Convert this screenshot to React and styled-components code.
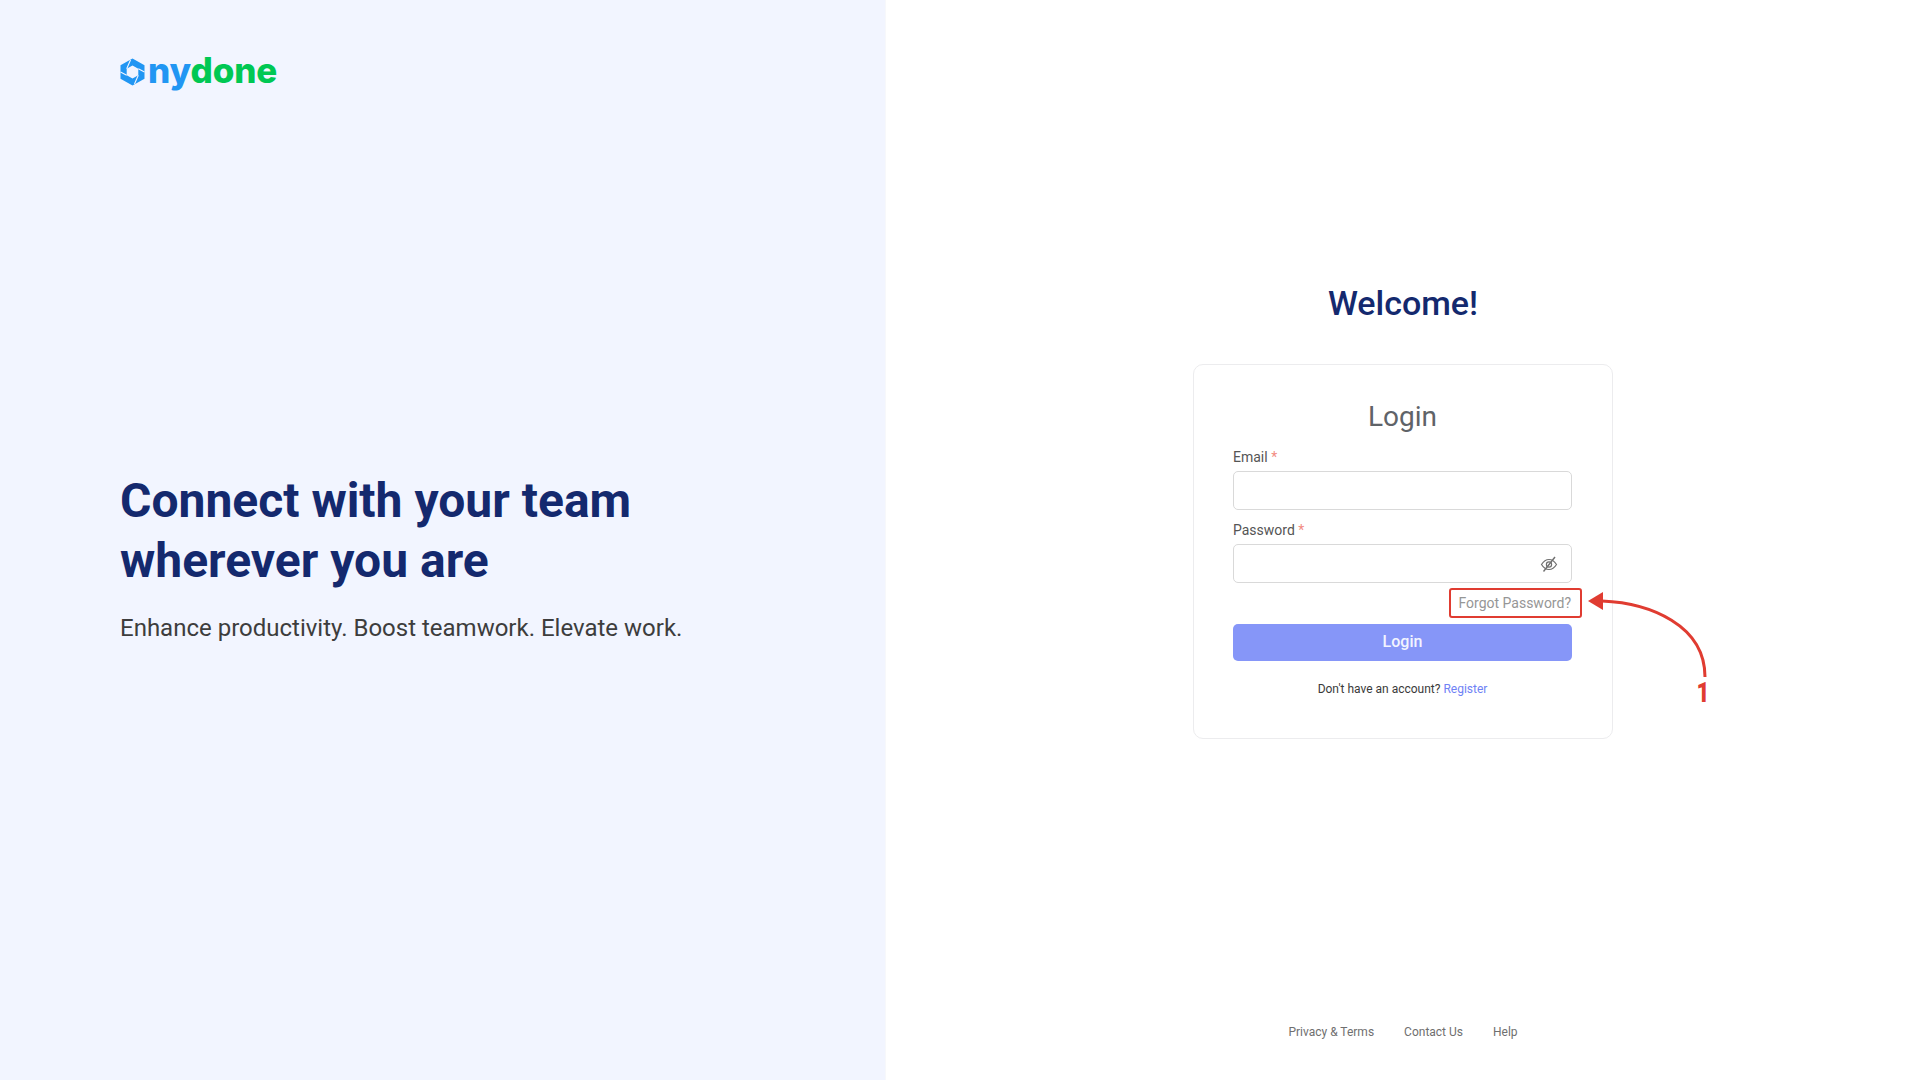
import React from 'react'
import styled, { createGlobalStyle } from 'styled-components'

const GlobalStyle = createGlobalStyle`
  html, body {
    margin: 0;
    padding: 0;
    background: #fff;
  }
  * {
    box-sizing: border-box;
  }
  body {
    font-family: Roboto, "Liberation Sans", sans-serif;
  }
`

const LogoMark = () => (
  <LogoSvg width="25" height="28" viewBox="0 0 25 28">
    <path
      fill="#2196f3"
      fillRule="evenodd"
      d="M12.5 0.5 L24.5 7.2 L24.5 20.8 L12.5 27.5 L0.5 20.8 L0.5 7.2 Z M12.5 7.5 L6.7 10.7 L6.7 17.3 L12.5 20.5 L18.3 17.3 L18.3 10.7 Z"
    />
    <path
      stroke="#f2f5ff"
      strokeWidth="1.1"
      fill="none"
      d="M6.7 10.7 L10.5 2 M18.3 10.7 L24.5 14 M18.3 17.3 L14.5 26 M6.7 17.3 L0.5 14"
    />
  </LogoSvg>
)

const EyeSlash = () => (
  <svg width="18" height="18" viewBox="0 0 18 18" fill="none" stroke="#707070" strokeWidth="1.2">
    <path d="M1.5 9.5 C4 5.5 6.5 4.5 9 4.5 C11.5 4.5 14 5.5 16.5 9.5 C14 13.5 11.5 14.5 9 14.5 C6.5 14.5 4 13.5 1.5 9.5 Z" />
    <circle cx="9" cy="9.5" r="2.6" />
    <path d="M3.5 16.5 L15 2" strokeWidth="1.4" />
  </svg>
)

const Arrow = () => (
  <svg width="122" height="112" viewBox="0 0 122 112" fill="none">
    <path d="M14 12 C62 14 117 36 117 88" stroke="#e03c31" strokeWidth="3" />
    <path d="M0 12 L15 3 L15 21 Z" fill="#e03c31" />
  </svg>
)

export default function App() {
  return (
    <Page>
      <GlobalStyle />
      <LeftPanel>
        <Logo>
          <LogoMark />
          <LogoText>
            <LogoBlue>ny</LogoBlue>
            <LogoGreen>done</LogoGreen>
          </LogoText>
        </Logo>
        <Hero>
          <Headline>
            Connect with your team
            <br />
            wherever you are
          </Headline>
          <Tagline>Enhance productivity. Boost teamwork. Elevate work.</Tagline>
        </Hero>
      </LeftPanel>
      <RightPanel>
        <Welcome>Welcome!</Welcome>
        <Card>
          <CardTitle>Login</CardTitle>
          <Field>
            <Label>
              Email <Required>*</Required>
            </Label>
            <InputBox />
          </Field>
          <Field>
            <Label>
              Password <Required>*</Required>
            </Label>
            <InputBox>
              <EyeSlash />
            </InputBox>
          </Field>
          <ForgotRow>
            <Forgot>Forgot Password?</Forgot>
            <ArrowWrap>
              <Arrow />
            </ArrowWrap>
            <Number>1</Number>
          </ForgotRow>
          <LoginButton>Login</LoginButton>
          <RegisterLine>
            Don't have an account? <RegisterLink>Register</RegisterLink>
          </RegisterLine>
        </Card>
        <Footer>
          <FooterLink>Privacy &amp; Terms</FooterLink>
          <FooterLink>Contact Us</FooterLink>
          <FooterLink>Help</FooterLink>
        </Footer>
      </RightPanel>
    </Page>
  )
}

const Page = styled.div`
  display: flex;
  width: 1920px;
  height: 1080px;
  overflow: hidden;
`

const LeftPanel = styled.div`
  width: 885px;
  background: #f2f5ff;
  padding: 47px 0 0 120px;
`

const Logo = styled.div`
  display: flex;
  align-items: center;
  gap: 3px;
  height: 46px;
`

const LogoSvg = styled.svg`
  margin-top: 4px;
`

const LogoText = styled.div`
  font-family: Inter, sans-serif;
  font-size: 35px;
  font-weight: 800;
  line-height: 46px;
  letter-spacing: -0.1px;
`

const LogoBlue = styled.span`
  color: #2196f3;
`

const LogoGreen = styled.span`
  color: #00c853;
`

const Hero = styled.div`
  margin-top: 378px;
`

const Headline = styled.h1`
  margin: 0;
  font-size: 48px;
  font-weight: 700;
  line-height: 60px;
  color: #14296e;
`

const Tagline = styled.p`
  margin: 21px 0 0;
  font-size: 24px;
  line-height: 32px;
  color: #3d3d3d;
`

const RightPanel = styled.div`
  flex: 1;
  display: flex;
  flex-direction: column;
  align-items: center;
  padding-top: 282px;
  background: #fff;
  border-left: 1px solid #f7f8fb;
`

const Welcome = styled.h2`
  margin: 0;
  font-size: 34px;
  font-weight: 500;
  line-height: 42px;
  color: #14296e;
`

const Card = styled.div`
  width: 420px;
  height: 375px;
  margin-top: 40px;
  padding: 34px 40px 0 39px;
  background: #fff;
  border: 1px solid #ececee;
  border-radius: 10px;
`

const CardTitle = styled.div`
  font-size: 28px;
  line-height: 36px;
  text-align: center;
  color: #5f6368;
`

const Field = styled.div`
  margin-top: 12px;

  & + & {
    margin-top: 10px;
  }
`

const Label = styled.div`
  font-size: 14px;
  line-height: 20px;
  margin-bottom: 4px;
  color: #555;
`

const Required = styled.span`
  color: #f28b82;
`

const InputBox = styled.div`
  display: flex;
  align-items: center;
  justify-content: flex-end;
  height: 39px;
  padding-right: 13px;
  background: #fff;
  border: 1px solid #d9d9d9;
  border-radius: 5px;
`

const ForgotRow = styled.div`
  position: relative;
  display: flex;
  justify-content: flex-end;
  margin-top: 5px;
  margin-right: -10px;
`

const Forgot = styled.div`
  height: 30px;
  padding: 0 9px 0 7px;
  font-size: 14px;
  line-height: 26px;
  color: #969696;
  border: 2px solid #e03c31;
  border-radius: 3px;
`

const ArrowWrap = styled.div`
  position: absolute;
  left: 355px;
  top: 1px;
  line-height: 0;
`

const Number = styled.div`
  position: absolute;
  left: 462px;
  top: 90px;
  font-size: 28px;
  font-weight: 900;
  line-height: 30px;
  color: #e03c31;
  transform: scaleX(0.8);
`

const LoginButton = styled.button`
  display: block;
  width: 100%;
  height: 37px;
  margin-top: 6px;
  padding: 0 0 3px;
  font-family: inherit;
  font-size: 16px;
  font-weight: 500;
  color: #f2f4ff;
  background: #8696f8;
  border: none;
  border-radius: 5px;
`

const RegisterLine = styled.div`
  margin-top: 20px;
  font-size: 12px;
  line-height: 16px;
  text-align: center;
  color: #3a3a3a;
`

const RegisterLink = styled.span`
  color: #6f82f5;
`

const Footer = styled.div`
  display: flex;
  gap: 30px;
  margin-top: 285px;
`

const FooterLink = styled.span`
  font-size: 12px;
  line-height: 16px;
  color: #6f6f6f;
`
